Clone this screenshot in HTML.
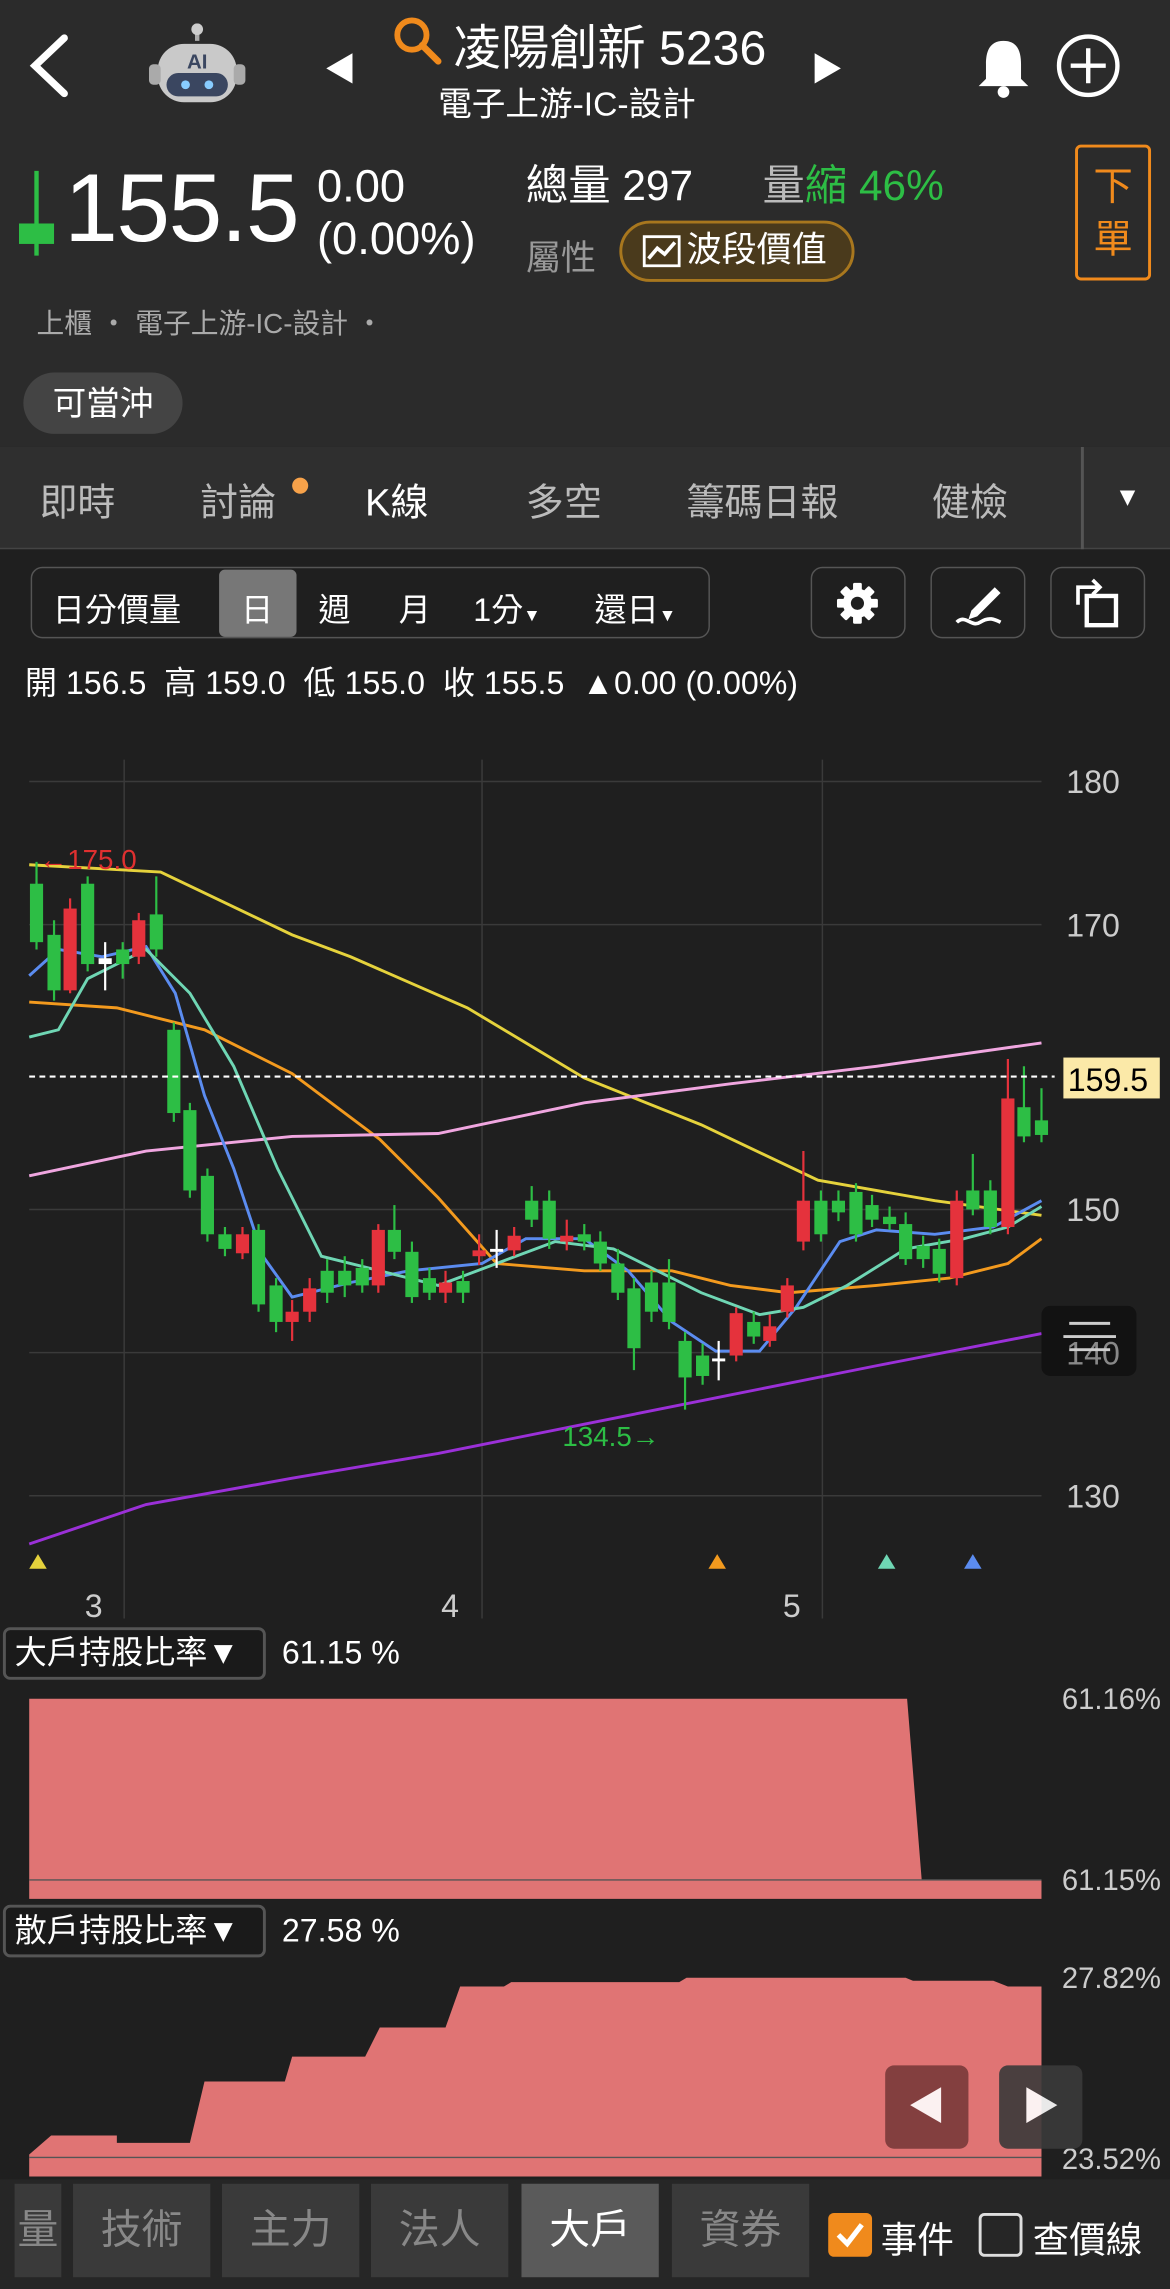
<!DOCTYPE html>
<html><head><meta charset="utf-8">
<style>
*{margin:0;padding:0;box-sizing:border-box}
html,body{width:1170px;height:2289px;overflow:hidden;background:#1c1c1c}
#w{width:801px;height:1568px;transform:scale(1.4607);transform-origin:0 0;position:relative;background:#1f1f1f;font-family:"Liberation Sans","Noto Sans CJK TC",sans-serif;color:#fff}
.a{position:absolute;white-space:nowrap}
.hdr{position:absolute;left:0;top:0;width:801px;height:306px;background:#2b2b2b}
.tabs{position:absolute;left:0;top:306px;width:801px;height:70px;background:#2f2f2f;border-bottom:1px solid #444}
.tb{font-size:26px;color:#bbb;top:324px}
.btn{position:absolute;border:1.5px solid #555;border-radius:8px;height:49px;top:388px}
.bt{position:absolute;top:1495px;height:64px;background:#3a3a3a;color:#888;font-size:28px;text-align:center;line-height:64px}
</style></head><body><div id="w">
<div class="hdr"></div>
<!-- header -->
<svg class="a" style="left:14px;top:22px" width="36" height="46"><path d="M30 4 L10 23 L30 42" stroke="#fff" stroke-width="5" fill="none" stroke-linecap="round"/></svg>
<svg class="a" style="left:100px;top:16px" width="70" height="58"><line x1="35" y1="2" x2="35" y2="12" stroke="#aaa" stroke-width="3"/><circle cx="35" cy="4" r="4" fill="#ccc"/><rect x="8" y="14" width="54" height="40" rx="18" fill="#c9c9c9"/><rect x="2" y="28" width="8" height="14" rx="3" fill="#aaa"/><rect x="60" y="28" width="8" height="14" rx="3" fill="#aaa"/><rect x="14" y="34" width="42" height="16" rx="8" fill="#3a4660"/><circle cx="27" cy="42" r="3" fill="#8cf"/><circle cx="43" cy="42" r="3" fill="#8cf"/><text x="35" y="31" font-size="14" font-weight="bold" fill="#3a4660" text-anchor="middle" font-family="Liberation Sans">AI</text></svg>
<div class="a" style="left:222px;top:30px;font-size:22px">◀</div>
<div class="a" style="left:555px;top:30px;font-size:22px">▶</div>
<svg class="a" style="left:268px;top:10px" width="36" height="36"><circle cx="14" cy="14" r="10" stroke="#f08a1c" stroke-width="4" fill="none"/><line x1="21" y1="21" x2="32" y2="32" stroke="#f08a1c" stroke-width="4.5" stroke-linecap="round"/></svg>
<div class="a" style="left:310px;top:6px;font-size:33px">凌陽創新 5236</div>
<div class="a" style="left:300px;top:52px;font-size:23px">電子上游-IC-設計</div>
<svg class="a" style="left:666px;top:24px" width="42" height="44"><path d="M21 4 C11 4 9 12 9 20 L9 30 L4 35 L38 35 L33 30 L33 20 C33 12 31 4 21 4Z" fill="#fff"/><circle cx="21" cy="39" r="4" fill="#fff"/></svg>
<svg class="a" style="left:722px;top:22px" width="46" height="46"><circle cx="23" cy="23" r="20" stroke="#fff" stroke-width="3" fill="none"/><path d="M23 11V35M11 23H35" stroke="#fff" stroke-width="3"/></svg>
<!-- price -->
<svg class="a" style="left:10px;top:115px" width="30" height="62"><line x1="15" y1="2" x2="15" y2="60" stroke="#2dbe45" stroke-width="3"/><rect x="3" y="38" width="24" height="14" fill="#2dbe45"/></svg>
<div class="a" style="left:44px;top:104px;font-size:66px;letter-spacing:-1px">155.5</div>
<div class="a" style="left:217px;top:110px;font-size:31px">0.00</div>
<div class="a" style="left:217px;top:146px;font-size:31px">(0.00%)</div>
<div class="a" style="left:360px;top:104px;font-size:29px">總量 297</div>
<div class="a" style="left:522px;top:104px;font-size:29px"><span style="color:#bbb">量</span><span style="color:#2dbe45">縮 46%</span></div>
<div class="a" style="left:360px;top:157px;font-size:24px;color:#999">屬性</div>
<div class="a" style="left:424px;top:151px;width:161px;height:42px;border:2px solid #a8771e;border-radius:21px;background:#4a3a1c;font-size:24px;line-height:38px;padding-left:44px">波段價值</div>
<svg class="a" style="left:440px;top:161px" width="26" height="22"><rect x="1" y="1" width="24" height="20" fill="none" stroke="#fff" stroke-width="2"/><path d="M4 16 L10 9 L15 13 L22 5" stroke="#fff" stroke-width="2.5" fill="none"/></svg>
<div class="a" style="left:736px;top:99px;width:52px;height:93px;border:2px solid #f08a1c;border-radius:4px;color:#f08a1c;font-size:27px;text-align:center;line-height:36px;padding-top:9px;white-space:normal">下<br>單</div>
<div class="a" style="left:25px;top:207px;font-size:19px;color:#aaa">上櫃 ・ 電子上游-IC-設計 ・</div>
<div class="a" style="left:16px;top:255px;width:109px;height:42px;border-radius:21px;background:#444;font-size:23px;line-height:42px;text-align:center">可當沖</div>
<!-- tabs -->
<div class="tabs"></div>
<div class="a tb" style="left:27px">即時</div>
<div class="a tb" style="left:137px">討論</div>
<div class="a" style="left:200px;top:327px;width:11px;height:11px;border-radius:6px;background:#f7a24a"></div>
<div class="a tb" style="left:250px;color:#fff">K線</div>
<div class="a tb" style="left:360px">多空</div>
<div class="a tb" style="left:470px">籌碼日報</div>
<div class="a tb" style="left:638px">健檢</div>
<div class="a" style="left:740px;top:306px;width:2px;height:70px;background:#555"></div>
<div class="a" style="left:763px;top:330px;font-size:18px;color:#fff">▼</div>
<!-- toolbar -->
<div class="btn" style="left:21px;width:465px"></div>
<div class="a" style="left:150px;top:390px;width:53px;height:46px;background:#777;border-radius:4px"></div>
<div class="a" style="left:36px;top:400px;font-size:22px">日分價量</div>
<div class="a" style="left:165px;top:400px;font-size:22px">日</div>
<div class="a" style="left:218px;top:400px;font-size:22px">週</div>
<div class="a" style="left:273px;top:400px;font-size:22px">月</div>
<div class="a" style="left:324px;top:400px;font-size:22px">1分<span style="font-size:12px">▼</span></div>
<div class="a" style="left:407px;top:400px;font-size:22px">還日<span style="font-size:12px">▼</span></div>
<div class="btn" style="left:555px;width:65px"></div>
<div class="btn" style="left:637px;width:65px"></div>
<div class="btn" style="left:719px;width:65px"></div>
<svg class="a" style="left:571px;top:397px" width="32" height="32" viewBox="0 0 32 32"><g fill="#fff"><circle cx="16" cy="16" r="10"/><g id="t"><rect x="13" y="2" width="6" height="28" rx="1"/></g><rect x="13" y="2" width="6" height="28" rx="1" transform="rotate(45 16 16)"/><rect x="13" y="2" width="6" height="28" rx="1" transform="rotate(90 16 16)"/><rect x="13" y="2" width="6" height="28" rx="1" transform="rotate(135 16 16)"/></g><circle cx="16" cy="16" r="4.5" fill="#1f1f1f"/></svg>
<svg class="a" style="left:651px;top:396px" width="38" height="36"><path d="M14 22 L30 6 L34 10 L18 26 L12 28Z" fill="#fff"/><path d="M4 30 C10 24 14 34 20 30 S30 28 34 30" stroke="#fff" stroke-width="2.5" fill="none"/></svg>
<svg class="a" style="left:732px;top:394px" width="38" height="40"><rect x="12" y="14" width="20" height="20" fill="none" stroke="#fff" stroke-width="3"/><path d="M6 20 V8 H20 M16 3 L21 8 L16 13" stroke="#fff" stroke-width="2.5" fill="none"/></svg>
<div class="a" style="left:17px;top:450px;font-size:22px">開 156.5&nbsp; 高 159.0&nbsp; 低 155.0&nbsp; 收 155.5&nbsp; ▲0.00 (0.00%)</div>
<!-- chart -->
<svg class="a" id="ch" style="left:0;top:0" width="801" height="1568">
<g stroke="#3a3a3a" stroke-width="1">
<line x1="20" y1="535" x2="713" y2="535"/><line x1="20" y1="633" x2="713" y2="633"/><line x1="20" y1="828" x2="713" y2="828"/><line x1="20" y1="926" x2="713" y2="926"/><line x1="20" y1="1024" x2="713" y2="1024"/>
<line x1="85" y1="520" x2="85" y2="1108"/><line x1="330" y1="520" x2="330" y2="1108"/><line x1="563" y1="520" x2="563" y2="1108"/>
</g>
<g font-size="22" fill="#ccc" font-family="Liberation Sans"><text x="730" y="543">180</text><text x="730" y="641">170</text><text x="730" y="836">150</text><text x="730" y="1032">130</text>
<text x="58" y="1107">3</text><text x="302" y="1107">4</text><text x="536" y="1107">5</text></g>
<g fill="none" stroke-width="2">
<polyline stroke="#e5d23c" points="20,592 110,597 200,640 240,655 320,690 400,738 480,770 560,808 640,822 713,832"/>
<polyline stroke="#f39a1e" points="20,686 80,690 140,705 200,735 260,780 300,820 340,865 400,870 460,870 500,880 540,885 600,880 650,875 690,865 713,848"/>
<polyline stroke="#f0a6e0" points="20,805 100,788 200,778 300,776 400,755 500,742 600,730 713,714"/>
<polyline stroke="#9b30d8" points="20,1057 100,1030 200,1012 300,995 400,975 500,955 600,935 713,913"/>
<polyline stroke="#5b8cf0" points="20,668 40,650 70,655 100,648 120,680 140,750 160,800 180,860 200,888 240,878 280,870 330,865 360,848 400,848 430,870 460,905 490,925 520,925 545,895 575,850 600,842 640,845 680,840 713,822"/>
<polyline stroke="#6fd6b4" points="20,710 40,705 60,670 100,650 130,680 160,730 190,800 220,860 260,870 300,880 340,865 380,850 420,855 450,870 480,885 520,900 550,895 580,880 620,855 660,848 690,840 713,826"/>
</g>
<g id="cd"></g>
<line x1="20" y1="737" x2="722" y2="737" stroke="#fff" stroke-width="1.5" stroke-dasharray="4,3"/>
<rect x="728" y="724" width="66" height="28" fill="#fbe9a8"/><text x="731" y="747" font-size="22" fill="#000" font-family="Liberation Sans">159.5</text>
<text x="27" y="595" font-size="19" fill="#e03030" font-family="Liberation Sans">←175.0</text>
<text x="385" y="990" font-size="19" fill="#2dbe45" font-family="Liberation Sans">134.5→</text>
<rect x="713" y="894" width="65" height="48" rx="6" fill="#111" opacity=".85"/><text x="730" y="934" font-size="22" fill="#888" font-family="Liberation Sans">140</text>
<path d="M732 906h28M728 915h36M732 924h28" stroke="#ccc" stroke-width="2"/>
<path d="M20 1074 l6 -10 l6 10z" fill="#e5d23c"/><path d="M485 1074 l6 -10 l6 10z" fill="#f39a1e"/><path d="M601 1074 l6 -10 l6 10z" fill="#6fd6b4"/><path d="M660 1074 l6 -10 l6 10z" fill="#5b8cf0"/>
<!-- sub1 -->
<polygon points="20,1163 621,1163 631,1287 713,1287 713,1300 20,1300" fill="#e07474"/>
<line x1="20" y1="1287" x2="713" y2="1287" stroke="#555"/>
<!-- sub2 -->
<polygon points="20,1475 35,1462 80,1462 80,1467 130,1467 140,1425 195,1425 200,1408 250,1408 260,1388 305,1388 315,1360 345,1360 350,1357 430,1357 465,1357 470,1354 620,1354 625,1356 680,1356 690,1360 713,1360 713,1490 20,1490" fill="#e07474"/>
<line x1="20" y1="1477" x2="713" y2="1477" stroke="#555"/>
<g font-size="20" fill="#ccc" font-family="Liberation Sans"><text x="727" y="1170">61.16%</text><text x="727" y="1294">61.15%</text><text x="727" y="1361">27.82%</text><text x="727" y="1485">23.52%</text></g>
</svg>
<div class="a" style="left:2px;top:1114px;width:180px;height:36px;border:2px solid #555;border-radius:5px;background:#1a1a1a;font-size:22px;line-height:32px;padding-left:6px">大戶持股比率▼</div>
<div class="a" style="left:193px;top:1119px;font-size:22px">61.15 %</div>
<div class="a" style="left:2px;top:1304px;width:180px;height:36px;border:2px solid #555;border-radius:5px;background:#1a1a1a;font-size:22px;line-height:32px;padding-left:6px">散戶持股比率▼</div>
<div class="a" style="left:193px;top:1309px;font-size:22px">27.58 %</div>
<div class="a" style="left:606px;top:1414px;width:57px;height:57px;border-radius:6px;background:#7a3a3a;opacity:.9;font-size:26px;line-height:57px;text-align:center">◀</div>
<div class="a" style="left:684px;top:1414px;width:57px;height:57px;border-radius:6px;background:#3a3a3a;opacity:.9;font-size:26px;line-height:57px;text-align:center">▶</div>
<!-- bottom -->
<div class="a" style="left:0;top:1492px;width:801px;height:76px;background:#262626"></div>
<div class="bt" style="left:10px;width:32px">量</div>
<div class="bt" style="left:50px;width:94px">技術</div>
<div class="bt" style="left:152px;width:94px">主力</div>
<div class="bt" style="left:254px;width:94px">法人</div>
<div class="bt" style="left:357px;width:94px;background:#5a5a5a;color:#fff">大戶</div>
<div class="bt" style="left:460px;width:94px">資券</div>
<div class="a" style="left:567px;top:1515px;width:30px;height:30px;border-radius:4px;background:#f08a1c"></div>
<svg class="a" style="left:570px;top:1518px" width="24" height="24"><path d="M4 12 L10 18 L20 5" stroke="#fff" stroke-width="3.5" fill="none"/></svg>
<div class="a" style="left:603px;top:1514px;font-size:25px">事件</div>
<div class="a" style="left:670px;top:1515px;width:30px;height:30px;border-radius:4px;border:2px solid #ddd"></div>
<div class="a" style="left:707px;top:1514px;font-size:25px">查價線</div>
</div>
<script>
var d=[[25,605,645,'g',590,650],[37,640,678,'g',630,685],[48,622,678,'r',615,680],[60,605,660,'g',600,665],[72,656,660,'w',645,678],[84,650,660,'g',645,670],[95,630,655,'r',625,660],[107,626,650,'g',600,655],[119,705,762,'g',700,768],[130,760,815,'g',755,820],[142,805,845,'g',800,850],[154,845,855,'g',840,860],[166,845,858,'r',840,862],[177,842,893,'g',838,898],[189,880,905,'g',875,912],[200,898,905,'r',890,918],[212,882,898,'r',875,905],[224,870,885,'g',862,892],[236,870,880,'g',860,888],[248,868,880,'g',862,885],[259,842,880,'r',838,885],[270,842,857,'g',825,862],[282,857,888,'g',850,892],[294,875,885,'g',868,890],[305,878,885,'r',870,892],[317,877,885,'g',870,892],[328,856,860,'r',845,866],[340,855,857,'w',842,868],[352,846,856,'r',840,860],[364,822,835,'g',812,840],[376,822,848,'g',815,855],[388,846,850,'r',835,856],[400,845,850,'g',838,856],[411,850,865,'g',843,870],[423,865,885,'g',855,890],[434,882,923,'g',875,938],[446,878,898,'g',870,905],[458,878,905,'g',862,910],[469,918,943,'g',912,965],[481,928,942,'g',920,948],[492,930,932,'w',918,945],[504,899,928,'r',895,932],[516,905,915,'g',898,920],[527,908,918,'r',900,922],[539,880,898,'r',875,902],[550,822,850,'r',788,856],[562,822,845,'g',815,850],[574,822,830,'g',815,836],[586,816,845,'g',810,850],[597,825,835,'g',818,840],[609,833,838,'g',826,842],[620,838,862,'g',830,866],[632,853,862,'g',846,868],[643,855,872,'g',848,878],[655,822,875,'r',815,880],[666,815,828,'g',790,832],[678,815,840,'g',808,845],[690,752,840,'r',725,845],[701,758,778,'g',730,782],[713,767,777,'g',745,782]];
var c={g:'#2dbe45',r:'#e5323c',w:'#fff'},s='';
d.forEach(function(k){var col=c[k[3]];s+='<line x1="'+k[0]+'" y1="'+k[4]+'" x2="'+k[0]+'" y2="'+k[5]+'" stroke="'+col+'" stroke-width="1.5"/>';s+='<rect x="'+(k[0]-4.5)+'" y="'+k[1]+'" width="9" height="'+Math.max(2,k[2]-k[1])+'" fill="'+col+'"/>';});
document.getElementById('cd').innerHTML=s;
</script>
</body></html>
